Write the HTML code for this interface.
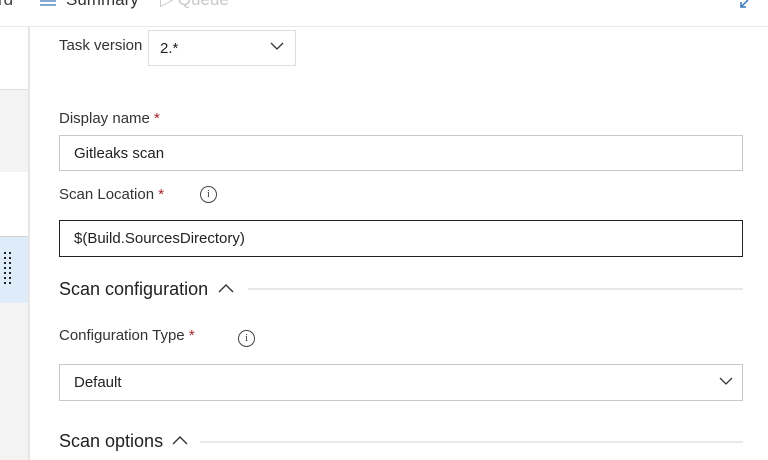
<!DOCTYPE html><html><head><style>
body{margin:0;width:768px;height:460px;overflow:hidden;background:#fff;font-family:"Segoe UI","Liberation Sans",sans-serif;position:relative;color:#333}
.a{position:absolute}
.lbl{font-size:15px;color:#333}
.box{position:absolute;border:1px solid #c8c8c8;box-sizing:border-box;font-size:15px;color:#222;padding-left:14px;display:flex;align-items:center}
.star{color:#a4262c}
.info{position:absolute;width:17px;height:17px;border:1.4px solid #444;border-radius:50%;box-sizing:border-box;font-size:11px;text-align:center;line-height:14px;color:#444;font-family:"Liberation Serif",serif}
.sec{position:absolute;font-size:18px;color:#222}
.line{position:absolute;height:2px;background:#e8e8e8}
</style></head><body>
<div class="a" style="left:0;top:0;width:768px;height:26px;border-bottom:1px solid #eaeaea"></div>
<div class="a" style="left:-2px;top:-10px;font-size:17px;color:#444">rd</div>
<svg class="a" style="left:38px;top:0" width="20" height="8"><path d="M2 1h16M2 5h16" stroke="#3a76b8" stroke-width="1.3"/></svg>
<div class="a" style="left:66px;top:-10px;font-size:17px;color:#333">Summary</div>
<div class="a" style="left:160px;top:-10px;font-size:17px;color:#c8c8c8">▷ Queue</div>
<div class="a" style="left:253px;top:-12px;font-size:18px;color:#333;letter-spacing:1px">···</div>
<svg class="a" style="left:738px;top:0" width="14" height="8"><path d="M10 0L3 7M3 2v5h5" stroke="#3a76b8" stroke-width="1.5" fill="none"/></svg>
<div class="a" style="left:0;top:27px;width:28px;height:62px;background:#fff;border-bottom:1px solid #e0e0e0"></div>
<div class="a" style="left:0;top:90px;width:28px;height:82px;background:#f3f3f3"></div>
<div class="a" style="left:0;top:236px;width:28px;height:66px;background:#deecf9;border-top:1px solid #d0d0d0;border-bottom:1px solid #d0d0d0"></div>
<div class="a" style="left:0;top:303px;width:28px;height:157px;background:#f3f3f3"></div>
<div class="a" style="left:28px;top:27px;width:2px;height:433px;background:#e6e6e6"></div>
<svg class="a" style="left:3px;top:251px" width="10" height="36"><g fill="#222"><rect x="1" y="1" width="2" height="2"/><rect x="6" y="1" width="2" height="2"/><rect x="1" y="6" width="2" height="2"/><rect x="6" y="6" width="2" height="2"/><rect x="1" y="11" width="2" height="2"/><rect x="6" y="11" width="2" height="2"/><rect x="1" y="16" width="2" height="2"/><rect x="6" y="16" width="2" height="2"/><rect x="1" y="21" width="2" height="2"/><rect x="6" y="21" width="2" height="2"/><rect x="1" y="26" width="2" height="2"/><rect x="6" y="26" width="2" height="2"/><rect x="1" y="31" width="2" height="2"/><rect x="6" y="31" width="2" height="2"/></g></svg>
<div class="a lbl" style="left:59px;top:37px">Task version</div>
<div class="box" style="left:148px;top:30px;width:148px;height:36px;border-color:#ddd;padding-left:11px">2.*</div>
<svg class="a" style="left:270px;top:42px" width="14" height="9"><path d="M1 1l6 6 6-6" stroke="#333" stroke-width="1.3" fill="none"/></svg>
<div class="a lbl" style="left:59px;top:110px">Display name <span class="star">*</span></div>
<div class="box" style="left:59px;top:135px;width:684px;height:36px">Gitleaks scan</div>
<div class="a lbl" style="left:59px;top:186px">Scan Location <span class="star">*</span></div>
<div class="info" style="left:200px;top:186px">i</div>
<div class="box" style="left:59px;top:220px;width:684px;height:37px;border-color:#222">$(Build.SourcesDirectory)</div>
<div class="sec" style="left:59px;top:279px">Scan configuration</div>
<svg class="a" style="left:218px;top:284px" width="16" height="10"><path d="M1 8l7-7 7 7" stroke="#333" stroke-width="1.4" fill="none"/></svg>
<div class="line" style="left:248px;top:288px;width:495px"></div>
<div class="a lbl" style="left:59px;top:327px">Configuration Type <span class="star">*</span></div>
<div class="info" style="left:238px;top:330px">i</div>
<div class="box" style="left:59px;top:364px;width:684px;height:37px">Default</div>
<svg class="a" style="left:719px;top:377px" width="14" height="9"><path d="M1 1l6 6 6-6" stroke="#333" stroke-width="1.3" fill="none"/></svg>
<div class="sec" style="left:59px;top:431px">Scan options</div>
<svg class="a" style="left:172px;top:436px" width="16" height="10"><path d="M1 8l7-7 7 7" stroke="#333" stroke-width="1.4" fill="none"/></svg>
<div class="line" style="left:200px;top:441px;width:543px"></div>
</body></html>
